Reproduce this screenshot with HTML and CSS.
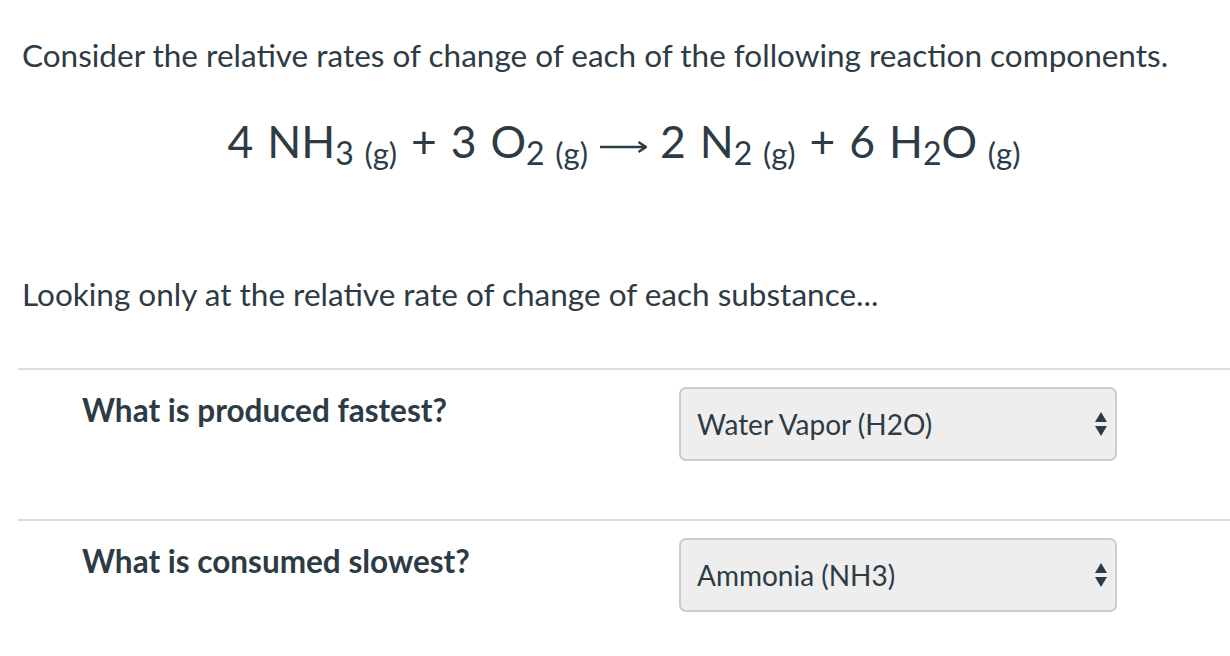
FILE: index.html
```html
<!DOCTYPE html>
<html lang="en">
<head>
<meta charset="utf-8">
<title>Relative rates of change</title>
<link rel="stylesheet" href="styles.css">
</head>
<body>
<div class="page">
  <p class="intro">Consider the relative rates of change of each of the following reaction components.</p>
  <p class="equation">4 NH<span class="sub">3 <span class="state">(g)</span></span> + 3 O<span class="sub">2 <span class="state">(g)</span></span><svg class="arrow" width="47" height="12" viewBox="0 0 47 12" role="img" aria-label="yields"><path d="M0 6 H45.5 M38.5 1 L46 6 L38.5 11" fill="none" stroke="#2d3b45" stroke-width="2.4" stroke-linejoin="miter"/></svg>2 N<span class="sub">2 <span class="state">(g)</span></span> + 6 H<span class="sub">2</span>O<span class="sub"> <span class="state">(g)</span></span></p>
  <p class="lead">Looking only at the relative rate of change of each substance...</p>
  <div class="rows">
    <div class="row">
      <div class="label">What is produced fastest?</div>
      <div class="select" role="combobox" aria-expanded="false">
        <span class="select-text">Water Vapor (H2O)</span>
        <svg class="arrows" width="12" height="24" viewBox="0 0 12 24" aria-hidden="true"><path d="M6 0 L12 10 L0 10 Z M6 24 L12 14 L0 14 Z" fill="#2d3b45"/></svg>
      </div>
    </div>
    <div class="row">
      <div class="label">What is consumed slowest?</div>
      <div class="select" role="combobox" aria-expanded="false">
        <span class="select-text">Ammonia (NH3)</span>
        <svg class="arrows" width="12" height="24" viewBox="0 0 12 24" aria-hidden="true"><path d="M6 0 L12 10 L0 10 Z M6 24 L12 14 L0 14 Z" fill="#2d3b45"/></svg>
      </div>
    </div>
  </div>
</div>
</body>
</html>
```
FILE: styles.css
```css
html, body {
  margin: 0;
  padding: 0;
  background: #ffffff;
}
body {
  font-family: Lato, "Noto Sans", "Liberation Sans", sans-serif;
  color: #2d3b45;
  overflow: hidden;
}
.page {
  padding: 32px 0 0 18px;
}
.intro {
  margin: 0;
  padding-left: 4px;
  font-size: 31.5px;
  line-height: 47px;
}
.equation {
  margin: 29px 0 0 0;
  text-align: center;
  font-size: 44.5px;
  line-height: 66px;
  height: 66px;
  white-space: nowrap;
  word-spacing: 2.5px;
}
.sub {
  font-size: 32px;
  line-height: 0;
  vertical-align: -7px;
}
.state {
  font-size: 31px;
}
.arrow {
  display: inline-block;
  vertical-align: 5px;
  margin: 0 13px 0 12px;
}
.lead {
  margin: 97px 0 0 0;
  padding-left: 4px;
  font-size: 31.5px;
  line-height: 47px;
}
.rows {
  margin-top: 50px;
}
.row {
  display: flex;
  align-items: flex-start;
  border-top: 2px solid #dddddd;
  padding: 17px 0 58px 0;
}
.row + .row {
  padding-bottom: 0;
}
.label {
  width: 661px;
  padding-left: 64px;
  box-sizing: border-box;
  font-size: 31.5px;
  font-weight: 700;
  line-height: 47px;
}
.select {
  display: flex;
  align-items: center;
  justify-content: space-between;
  box-sizing: border-box;
  width: 438px;
  height: 74px;
  padding: 0 8px 0 16px;
  background: #eeeeee;
  border: 2px solid #cccccc;
  border-radius: 7px;
  font-size: 28px;
}
.arrows {
  display: block;
}
```
